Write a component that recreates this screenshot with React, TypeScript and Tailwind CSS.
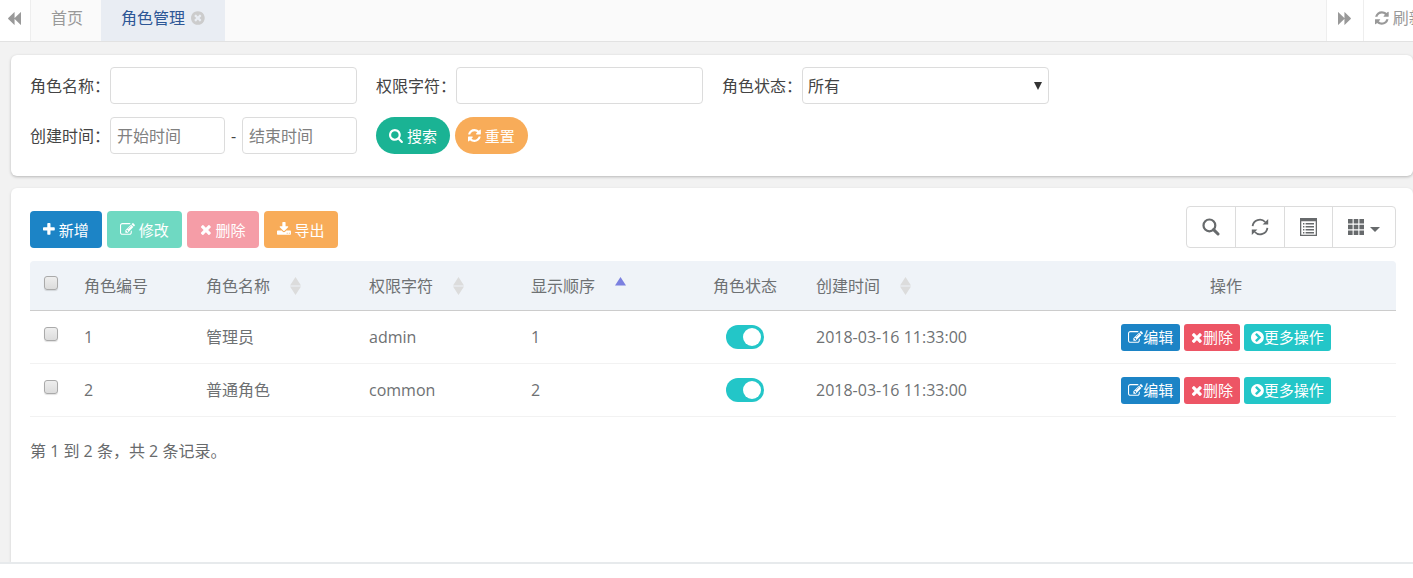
import { useState } from 'react'
import type { ReactNode } from 'react'
import clsx from 'clsx'

// [offset, advance, path] on a 1792 unit em
const ICONS = {
  plus: [192, 1408, 'M1600 736v192q0 40-28 68t-68 28h-416v416q0 40-28 68t-68 28h-192q-40 0-68-28t-28-68v-416h-416q-40 0-68-28t-28-68v-192q0-40 28-68t68-28h416v-416q0-40 28-68t68-28h192q40 0 68 28t28 68v416h416q40 0 68 28t28 68z'],
  edit: [0, 1792, 'M888 1184l116-116-152-152-116 116v56h96v96h56zm440-720q-16-16-33 1l-350 350q-17 17-1 33t33-1l350-350q17-17 1-33zm80 594v190q0 119-84.5 203.5t-203.5 84.5h-832q-119 0-203.5-84.5t-84.5-203.5v-832q0-119 84.5-203.5t203.5-84.5h832q63 0 117 25 15 7 18 23 3 17-9 29l-49 49q-14 14-32 8-23-6-45-6h-832q-66 0-113 47t-47 113v832q0 66 47 113t113 47h832q66 0 113-47t47-113v-126q0-13 9-22l64-64q15-15 35-7t20 29zm-96-738l288 288-672 672h-288v-288zm444 132l-92 92-288-288 92-92q28-28 68-28t68 28l152 152q28 28 28 68t-28 68z'],
  times: [192, 1408, 'M1490 1322q0 40-28 68l-136 136q-28 28-68 28t-68-28l-294-294-294 294q-28 28-68 28t-68-28l-136-136q-28-28-28-68t28-68l294-294-294-294q-28-28-28-68t28-68l136-136q28-28 68-28t68 28l294 294 294-294q28-28 68-28t68 28l136 136q28 28 28 68t-28 68l-294 294 294 294q28 28 28 68z'],
  search: [64, 1664, 'M1216 832q0-185-131.5-316.5t-316.5-131.5-316.5 131.5-131.5 316.5 131.5 316.5 316.5 131.5 316.5-131.5 131.5-316.5zm512 832q0 52-38 90t-90 38q-54 0-90-38l-343-342q-179 124-399 124-143 0-273.5-55.5t-225-150-150-225-55.5-273.5 55.5-273.5 150-225 225-150 273.5-55.5 273.5 55.5 225 150 150 225 55.5 273.5q0 220-124 399l343 343q37 37 37 90z'],
  refresh: [128, 1536, 'M1639 1056q0 5-1 7-64 268-268 434.5t-478 166.5q-146 0-282.5-55t-243.5-157l-129 129q-19 19-45 19t-45-19-19-45v-448q0-26 19-45t45-19h448q26 0 45 19t19 45-19 45l-137 137q71 66 161 102t187 36q134 0 250-65t186-179q11-17 53-117 8-23 30-23h192q13 0 22.5 9.5t9.5 22.5zm25-800v448q0 26-19 45t-45 19h-448q-26 0-45-19t-19-45 19-45l138-138q-148-137-349-137-134 0-250 65t-186 179q-11 17-53 117-8 23-30 23h-199q-13 0-22.5-9.5t-9.5-22.5v-7q65-268 270-434.5t480-166.5q146 0 284 55.5t245 156.5l130-129q19-19 45-19t45 19 19 45z'],
  download: [64, 1664, 'M1344 1344q0-26-19-45t-45-19-45 19-19 45 19 45 45 19 45-19 19-45zm256 0q0-26-19-45t-45-19-45 19-19 45 19 45 45 19 45-19 19-45zm128-224v320q0 40-28 68t-68 28h-1472q-40 0-68-28t-28-68v-320q0-40 28-68t68-28h465l135 136q58 56 136 56t136-56l136-136h464q40 0 68 28t28 68zm-325-569q17 41-14 70l-448 448q-18 19-45 19t-45-19l-448-448q-31-29-14-70 17-39 59-39h256v-448q0-26 19-45t45-19h256q26 0 45 19t19 45v448h256q42 0 59 39z'],
  more: [128, 1536, 'M845 1395l454-454q19-19 19-45t-19-45l-454-454q-19-19-45-19t-45 19l-102 102q-19 19-19 45t19 45l307 307-307 307q-19 19-19 45t19 45l102 102q19 19 45 19t45-19zm819-499q0 209-103 385.5t-279.5 279.5-385.5 103-385.5-103-279.5-279.5-103-385.5 103-385.5 279.5-279.5 385.5-103 385.5 103 279.5 279.5 103 385.5z'],
  close: [128, 1536, 'M1277 1122q0-26-19-45l-181-181 181-181q19-19 19-45 0-27-19-46l-90-90q-19-19-46-19-26 0-45 19l-181 181-181-181q-19-19-45-19-27 0-46 19l-90 90q-19 19-19 46 0 26 19 45l181 181-181 181q-19 19-19 45 0 27 19 46l90 90q19 19 46 19 26 0 45-19l181-181 181 181q19 19 45 19 27 0 46-19l90-90q19-19 19-46zm387-226q0 209-103 385.5t-279.5 279.5-385.5 103-385.5-103-279.5-279.5-103-385.5 103-385.5 279.5-279.5 385.5-103 385.5 103 279.5 279.5 103 385.5z'],
  backward: [0, 1792, 'M1747 141q19-19 32-13t13 32v1472q0 26-13 32t-32-13l-710-710q-9-9-13-19v710q0 26-13 32t-32-13l-710-710q-19-19-19-45t19-45l710-710q19-19 32-13t13 32v710q4-10 13-19z'],
  forward: [0, 1792, 'M45 1651q-19 19-32 13t-13-32v-1472q0-26 13-32t32 13l710 710q9 9 13 19v-710q0-26 13-32t32 13l710 710q19 19 19 45t-19 45l-710 710q-19 19-32 13t-13-32v-710q-4 10-13 19z'],
} as const

function Icon({ name, className = 'h-[15px]' }: { name: keyof typeof ICONS; className?: string }) {
  const [x, w, d] = ICONS[name]
  return (
    <svg viewBox={`${x} 0 ${w} 1792`} fill="currentColor" className={clsx('w-auto shrink-0', className)} aria-hidden="true">
      <path d={d} />
    </svg>
  )
}

const roles = [
  { id: 1, name: '管理员', key: 'admin', sort: 1, created: '2018-03-16 11:33:00' },
  { id: 2, name: '普通角色', key: 'common', sort: 2, created: '2018-03-16 11:33:00' },
]

const control = 'h-[37px] rounded border border-[#dcdcdc] bg-white text-base text-[#444] outline-none focus:border-[#1ab394]'

function TabBar() {
  return (
    <nav className="flex h-[42px] shrink-0 overflow-hidden border-b border-[#e2e2e2] bg-[#fafafa] text-[#999]">
      <button aria-label="向左" className="flex w-[31px] shrink-0 items-center justify-center border-r border-[#eee] bg-white pr-1 pb-1">
        <Icon name="backward" className="h-[15px]" />
      </button>
      <a href="#home" className="flex items-center pr-[18px] pb-[6px] pl-5">首页</a>
      <div className="flex items-center gap-[6px] bg-[#e9edf3] pr-5 pb-[6px] pl-5 text-[#2d5796]">
        <a href="#role">角色管理</a>
        <button aria-label="关闭" className="text-[#ccc]"><Icon name="close" className="h-4" /></button>
      </div>
      <div className="flex-1" />
      <button aria-label="向右" className="flex w-[38px] shrink-0 items-center justify-center border-x border-[#eee] bg-white pb-1">
        <Icon name="forward" className="h-[15px]" />
      </button>
      <button className="flex w-[49px] shrink-0 items-center gap-1 overflow-hidden bg-white pb-[6px] pl-[11px] whitespace-nowrap">
        <Icon name="refresh" className="h-4" />刷新
      </button>
    </nav>
  )
}

function SearchForm() {
  return (
    <form
      onSubmit={(e) => e.preventDefault()}
      className="flex shrink-0 flex-col gap-[13px] rounded-md bg-white px-[19px] pt-3 pb-[22px] text-[#444] shadow-[0_1px_3px_rgba(0,0,0,0.25)]"
    >
      <div className="flex gap-[19px]">
        <div className="flex items-center">
          <label htmlFor="roleName" className="w-20">角色名称：</label>
          <input id="roleName" type="text" className={clsx(control, 'w-[247px] px-[6px]')} />
        </div>
        <div className="flex items-center">
          <label htmlFor="roleKey" className="w-20">权限字符：</label>
          <input id="roleKey" type="text" className={clsx(control, 'w-[247px] px-[6px]')} />
        </div>
        <div className="flex items-center">
          <label htmlFor="status" className="w-20">角色状态：</label>
          <div className="relative">
            <select id="status" className={clsx(control, 'w-[247px] appearance-none px-[5px]')}>
              <option>所有</option>
              <option>正常</option>
              <option>停用</option>
            </select>
            <svg viewBox="0 0 8 8" className="pointer-events-none absolute top-[15px] right-[7px] size-2 fill-[#333]" aria-hidden="true">
              <path d="M0 0h8L4 8z" />
            </svg>
          </div>
        </div>
      </div>
      <div className="flex gap-[19px]">
        <div className="flex items-center">
          <label htmlFor="beginTime" className="w-20">创建时间：</label>
          <input id="beginTime" type="text" placeholder="开始时间" className={clsx(control, 'w-[115px] px-[6px] placeholder:text-[#808080]')} />
          <span className="w-[17px] text-center">-</span>
          <input aria-label="结束时间" type="text" placeholder="结束时间" className={clsx(control, 'w-[115px] px-[6px] placeholder:text-[#808080]')} />
        </div>
        <div className="flex gap-[5px] text-[15px] text-white">
          <button type="submit" className="flex h-[37px] items-center gap-1 rounded-full bg-[#1ab394] px-[13px]">
            <Icon name="search" />搜索
          </button>
          <button type="reset" className="flex h-[37px] items-center gap-1 rounded-full bg-[#f8ac59] px-[13px]">
            <Icon name="refresh" />重置
          </button>
        </div>
      </div>
    </form>
  )
}

function ToolButton({ icon, color, disabled, children }: { icon: keyof typeof ICONS; color: string; disabled?: boolean; children: ReactNode }) {
  return (
    <button disabled={disabled} className={clsx('flex h-[37px] items-center gap-1 rounded px-[13px] text-[15px] text-white', color)}>
      <Icon name={icon} />{children}
    </button>
  )
}

function Toolbar() {
  const cell = 'flex h-10 items-center justify-center hover:bg-gray-100'
  return (
    <div className="flex items-start justify-between">
      <div className="mt-[5px] flex gap-[5px]">
        <ToolButton icon="plus" color="bg-[#1c84c6]">新增</ToolButton>
        <ToolButton icon="edit" color="bg-[#6fd9c2]" disabled>修改</ToolButton>
        <ToolButton icon="times" color="bg-[#f59da7]" disabled>删除</ToolButton>
        <ToolButton icon="download" color="bg-[#f8ac59]">导出</ToolButton>
      </div>
      <div className="flex divide-x divide-[#dcdcdc] rounded border border-[#dcdcdc] text-[#676a6c]">
        <button aria-label="搜索" className={clsx(cell, 'w-[49px]')}>
          <svg viewBox="0 0 18 18" className="size-[18px]" fill="none" stroke="currentColor" aria-hidden="true">
            <circle cx="7.4" cy="7.4" r="5.9" strokeWidth="2.2" />
            <path d="M11.6 11.6l4.4 4.4" strokeWidth="3" strokeLinecap="round" />
          </svg>
        </button>
        <button aria-label="刷新" className={clsx(cell, 'w-[49px]')}>
          <svg viewBox="0 0 18 18" className="size-[18px]" fill="none" stroke="currentColor" strokeWidth="1.8" aria-hidden="true">
            <path d="M1.6 8.2A7.3 7.3 0 0 1 14.2 4M16.4 9.8A7.3 7.3 0 0 1 3.8 14" />
            <path d="M17.2 1v5.6h-5.6zM.8 17v-5.6h5.6z" fill="currentColor" stroke="none" />
          </svg>
        </button>
        <button aria-label="切换视图" className={clsx(cell, 'w-12')}>
          <svg viewBox="0 0 17 18" className="h-[18px] w-[17px]" fill="currentColor" aria-hidden="true">
            <path fillRule="evenodd" d="M0 0h17v18H0zM1.3 3.2v13.5h14.4V3.2z" />
            <path d="M3 5h1.4v1.4H3zM3 8h1.4v1.4H3zM3 11h1.4v1.4H3zM3 14h1.4v1.4H3zM5.6 5H14v1.4H5.6zM5.6 8H14v1.4H5.6zM5.6 11H14v1.4H5.6zM5.6 14H14v1.4H5.6z" />
          </svg>
        </button>
        <button aria-label="列" className={clsx(cell, 'w-[62px] gap-[6px]')}>
          <svg viewBox="0 0 16 16" className="size-4" fill="currentColor" aria-hidden="true">
            <path d="M0 0h4.6v4.4H0zM5.7 0h4.6v4.4H5.7zM11.4 0H16v4.4h-4.6zM0 5.8h4.6v4.4H0zM5.7 5.8h4.6v4.4H5.7zM11.4 5.8H16v4.4h-4.6zM0 11.6h4.6V16H0zM5.7 11.6h4.6V16H5.7zM11.4 11.6H16V16h-4.6z" />
          </svg>
          <svg viewBox="0 0 10 5" className="mt-1 h-[5px] w-[10px]" fill="currentColor" aria-hidden="true">
            <path d="M0 0h10L5 5z" />
          </svg>
        </button>
      </div>
    </div>
  )
}

function SortHeader({ children, asc }: { children: ReactNode; asc?: boolean }) {
  return (
    <th className="px-[9px] text-left font-normal" aria-sort={asc ? 'ascending' : undefined}>
      <button className="flex items-center gap-5">
        {children}
        <svg viewBox="0 0 11 18" className="h-[18px] w-[11px]" aria-hidden="true">
          {asc ? (
            <path d="M5.5 0L11 8.6H0z" fill="#7b80e0" />
          ) : (
            <path d="M5.5 0L11 8.4H0zM0 9.6h11L5.5 18z" fill="#dcdcdc" />
          )}
        </svg>
      </button>
    </th>
  )
}

function Check({ label }: { label: string }) {
  return (
    <input
      type="checkbox"
      aria-label={label}
      className="mx-auto mb-[6px] block size-[14px] appearance-none rounded-[3px] border border-[#aaa] bg-linear-to-b from-[#eee] to-[#dcdcdc] shadow-[0_1px_1px_rgba(0,0,0,0.12)] checked:from-[#1c84c6] checked:to-[#1c84c6]"
    />
  )
}

function Switch({ label }: { label: string }) {
  const [on, setOn] = useState(true)
  return (
    <input
      type="checkbox"
      role="switch"
      aria-label={label}
      checked={on}
      onChange={() => setOn(!on)}
      className="mx-auto block h-6 w-[38px] appearance-none rounded-full bg-gray-300 p-[3px] before:block before:size-[18px] before:rounded-full before:bg-white checked:bg-[#23c6c8] checked:before:ml-auto"
    />
  )
}

function RoleTable() {
  const action = 'flex h-[27px] items-center rounded-[3px] px-[7px]'
  return (
    <table className="mt-[13px] w-full table-fixed border-separate border-spacing-0 text-[#6e7173]">
      <colgroup>
        <col className="w-[45px]" />
        <col className="w-[122px]" />
        <col className="w-[163px]" />
        <col className="w-[162px]" />
        <col className="w-[161px]" />
        <col className="w-[124px]" />
        <col className="w-[249px]" />
        <col className="w-[340px]" />
      </colgroup>
      <thead>
        <tr className="h-[50px] bg-[#eff3f8] *:border-b *:border-[#ccc] *:first:rounded-tl *:last:rounded-tr">
          <th className="pr-1"><Check label="全选" /></th>
          <th className="px-[9px] text-left font-normal">角色编号</th>
          <SortHeader>角色名称</SortHeader>
          <SortHeader>权限字符</SortHeader>
          <SortHeader asc>显示顺序</SortHeader>
          <th className="font-normal">角色状态</th>
          <SortHeader>创建时间</SortHeader>
          <th className="font-normal">操作</th>
        </tr>
      </thead>
      <tbody>
        {roles.map((role) => (
          <tr key={role.id} className="h-[53px] *:border-b *:border-[#f2f2f2]">
            <td className="pr-1"><Check label={role.name} /></td>
            <td className="px-[9px]">{role.id}</td>
            <td className="px-[9px]">{role.name}</td>
            <td className="px-[9px]">{role.key}</td>
            <td className="px-[9px]">{role.sort}</td>
            <td><Switch label={`${role.name}状态`} /></td>
            <td className="px-[9px]">{role.created}</td>
            <td>
              <div className="flex justify-center gap-1 text-[15px] text-white">
                <a href="#edit" className={clsx(action, 'bg-[#1c84c6]')}><Icon name="edit" />编辑</a>
                <a href="#remove" className={clsx(action, 'bg-[#ed5565]')}><Icon name="times" />删除</a>
                <a href="#more" className={clsx(action, 'bg-[#23c6c8]')}><Icon name="more" />更多操作</a>
              </div>
            </td>
          </tr>
        ))}
      </tbody>
    </table>
  )
}

export default function App() {
  return (
    <div
      lang="zh-CN"
      className="flex min-h-screen flex-col bg-[#f2f2f2] font-['Open_Sans','Noto_Sans_CJK_SC',sans-serif] text-base leading-6 text-[#676a6c]"
    >
      <TabBar />
      <main className="flex flex-1 flex-col gap-3 overflow-hidden pt-[13px] pl-[11px]">
        <SearchForm />
        <section className="flex-1 rounded-t-md bg-white pt-[18px] pr-[17px] pl-[19px] shadow-[0_1px_3px_rgba(0,0,0,0.15)]">
          <Toolbar />
          <RoleTable />
          <p className="mt-[22px]">第 1 到 2 条，共 2 条记录。</p>
        </section>
      </main>
      <footer className="h-4 border-t-2 border-[#e7eaec] bg-white" />
    </div>
  )
}
